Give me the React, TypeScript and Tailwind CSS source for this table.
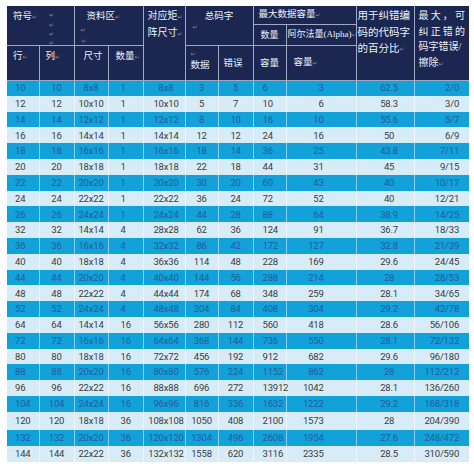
const rows: (string | number)[][] = [
  [10, 10, "8x8", 1, "8x8", 3, 5, 6, 3, "62.5", "2/0"],
  [12, 12, "10x10", 1, "10x10", 5, 7, 10, 6, "58.3", "3/0"],
  [14, 14, "12x12", 1, "12x12", 8, 10, 16, 10, "55.6", "5/7"],
  [16, 16, "14x14", 1, "14x14", 12, 12, 24, 16, "50", "6/9"],
  [18, 18, "16x16", 1, "16x16", 18, 14, 36, 25, "43.8", "7/11"],
  [20, 20, "18x18", 1, "18x18", 22, 18, 44, 31, "45", "9/15"],
  [22, 22, "20x20", 1, "20x20", 30, 20, 60, 43, "40", "10/17"],
  [24, 24, "22x22", 1, "22x22", 36, 24, 72, 52, "40", "12/21"],
  [26, 26, "24x24", 1, "24x24", 44, 28, 88, 64, "38.9", "14/25"],
  [32, 32, "14x14", 4, "28x28", 62, 36, 124, 91, "36.7", "18/33"],
  [36, 36, "16x16", 4, "32x32", 86, 42, 172, 127, "32.8", "21/39"],
  [40, 40, "18x18", 4, "36x36", 114, 48, 228, 169, "29.6", "24/45"],
  [44, 44, "20x20", 4, "40x40", 144, 56, 288, 214, "28", "28/53"],
  [48, 48, "22x22", 4, "44x44", 174, 68, 348, 259, "28.1", "34/65"],
  [52, 52, "24x24", 4, "48x48", 204, 84, 408, 304, "29.2", "42/78"],
  [64, 64, "14x14", 16, "56x56", 280, 112, 560, 418, "28.6", "56/106"],
  [72, 72, "16x16", 16, "64x64", 368, 144, 736, 550, "28.1", "72/132"],
  [80, 80, "18x18", 16, "72x72", 456, 192, 912, 682, "29.6", "96/180"],
  [88, 88, "20x20", 16, "80x80", 576, 224, 1152, 862, "28", "112/212"],
  [96, 96, "22x22", 16, "88x88", 696, 272, 13912, 1042, "28.1", "136/260"],
  [104, 104, "24x24", 16, "96x96", 816, 336, 1632, 1222, "29.2", "168/318"],
  [120, 120, "18x18", 36, "108x108", 1050, 408, 2100, 1573, "28", "204/390"],
  [132, 132, "20x20", 36, "120x120", 1304, 496, 2608, 1954, "27.6", "248/472"],
  [144, 144, "22x22", 36, "132x132", 1558, 620, 3116, 2335, "28.5", "310/590"],
];

// per-column alignment of the data cells
const align = [
  "text-left pl-[8px]",
  "text-center",
  "text-center",
  "text-left pl-[12px]",
  "text-center pl-[4px]",
  "text-center",
  "text-center",
  "text-left pl-[9px]",
  "text-right pr-[32px]",
  "text-center pl-[8px]",
  "text-right pr-[10px]",
];

const widths = [
  "w-[32px]", "w-[35px]", "w-[34px]", "w-[35px]", "w-[42px]", "w-[33px]",
  "w-[35px]", "w-[33px]", "w-[70px]", "w-[58px]", "w-[55px]",
];

// Word paragraph mark
const M = () => (
  <span className="text-[6px] text-[#7f8aa6] font-['DejaVu_Sans',sans-serif] align-middle">↵</span>
);

const th = "p-0 border border-[#9ea9c3] font-normal";

export default function App() {
  return (
    <div className="w-[474px] h-[468px] bg-white pl-[7px] pt-[6px] overflow-hidden">
      <table className="table-fixed border-collapse w-[462px]">
        <colgroup>
          {widths.map((w, i) => (
            <col key={i} className={w} />
          ))}
        </colgroup>
        <thead className="bg-[#1b2750] text-[#eef1f7] text-[9.5px] leading-[16px] font-['Liberation_Serif','Noto_Sans_CJK_SC',serif]">
          <tr className="h-[18px]">
            <th colSpan={2} rowSpan={2} className={`${th} text-left align-top border-t-0 border-l-0`}>
              <div className="flex pl-[6px] pt-[2px] h-[38px]">
                <div className="w-[36px]">
                  符号<M />
                </div>
                <div className="flex flex-col leading-[9.5px] pt-[2px]">
                  <M />
                  <M />
                  <M />
                  <span className="leading-[6px]">
                    <M />
                  </span>
                </div>
              </div>
            </th>
            <th colSpan={2} rowSpan={2} className={`${th} text-left align-top border-t-0`}>
              <div className="pt-[4px] leading-[12px] h-[38px]">
                <div className="pl-[12px]">
                  资料区<M />
                </div>
                <div className="pl-[6px]">
                  <M />
                </div>
                <div className="pl-[7px] leading-[9px]">
                  <M />
                </div>
              </div>
            </th>
            <th rowSpan={3} className={`${th} text-left align-top border-t-0`}>
              <div className="pt-[2px] pl-[4px] text-[10px]">
                对应矩<M />
                <br />
                阵尺寸<M />
              </div>
            </th>
            <th colSpan={2} rowSpan={2} className={`${th} align-top border-t-0`}>
              <div className="pt-[3px] leading-[14px]">
                <div className="text-center">总码字</div>
                <div className="text-left pl-[7px] leading-[6px]">
                  <M />
                </div>
              </div>
            </th>
            <th colSpan={2} className={`${th} text-left align-middle border-t-0 pl-[5px]`}>
              最大数据容量<M />
            </th>
            <th rowSpan={3} className={`${th} text-left align-top border-t-0`}>
              <div className="pl-[1px] pt-[2px] text-[10.5px] leading-[16.5px]">
                用于纠错编
                <br />
                码的代码字
                <br />
                的百分比<M />
              </div>
            </th>
            <th rowSpan={3} className={`${th} text-left align-top border-t-0 border-r-0`}>
              <div className="px-[4px] pt-[2px] text-[10px] leading-[15.5px]">
                <div className="flex justify-between">
                  <span>最</span>
                  <span>大</span>
                  <span>，</span>
                  <span>可</span>
                </div>
                <div className="flex justify-between">
                  <span>纠</span>
                  <span>正</span>
                  <span>错</span>
                  <span>的</span>
                </div>
                <div className="whitespace-nowrap">码字错误/</div>
                <div>
                  擦除<M />
                </div>
              </div>
            </th>
          </tr>
          <tr className="h-[21px]">
            <th className={`${th} align-middle text-center text-[9px]`}>数量</th>
            <th className={`${th} align-middle text-left pl-[1px] text-[9px] whitespace-nowrap`}>
              阿尔法量(Alpha)<M />
            </th>
          </tr>
          <tr className="h-[35px]">
            <th className={`${th} text-left align-top border-l-0 pl-[6px] pt-[2px]`}>
              行<M />
            </th>
            <th className={`${th} text-left align-top pl-[6px] pt-[2px]`}>
              列<M />
            </th>
            <th className={`${th} text-left align-top pl-[9px] pt-[2px]`}>尺寸</th>
            <th className={`${th} text-left align-top pl-[7px] pt-[2px]`}>
              数量<M />
            </th>
            <th className={`${th} text-left align-top pl-[5px] pt-[3px]`}>
              <div className="leading-[8px]">
                <M />
              </div>
              <div>数据</div>
            </th>
            <th className={`${th} text-left align-middle pl-[5px]`}>错误</th>
            <th className={`${th} align-middle text-center`}>容量</th>
            <th className={`${th} text-left align-middle pl-[7px]`}>
              容量<M />
            </th>
          </tr>
        </thead>
        <tbody className="font-['Roboto',sans-serif] text-[9.5px] tracking-[-0.2px]">
          {rows.map((r, i) => (
            <tr
              key={i}
              className={`${i % 2 === 0 ? "bg-[#12a1d9] text-[#1f5f99]" : "bg-[#d8ecf8] text-[#3b3b3b]"} ${
                r[0] === 120 ? "h-[18.5px]" : "h-[15.8px]"
              }`}
            >
              {r.map((v, j) => (
                <td
                  key={j}
                  className={`p-0 leading-none whitespace-nowrap align-middle border-r border-white/50 last:border-r-0 ${align[j]}`}
                >
                  {v}
                </td>
              ))}
            </tr>
          ))}
        </tbody>
      </table>
    </div>
  );
}
